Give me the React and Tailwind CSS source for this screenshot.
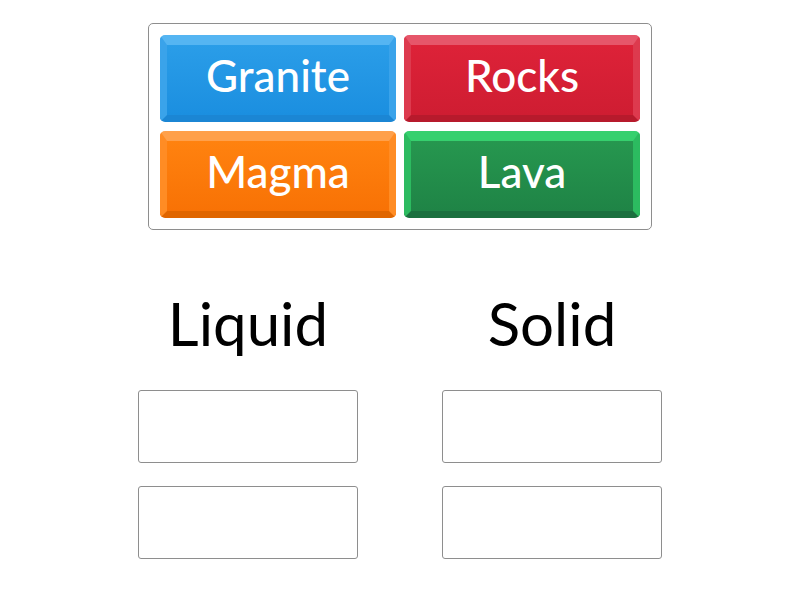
import React from 'react';

const tiles = [
  {
    label: 'Granite',
    outer: 'bg-[#4cb0f0] border-t-[#55b5f2] border-x-[#3aa3ea] border-b-[#1b86d4]',
    face: 'bg-gradient-to-b from-[#2a9de8] to-[#1b8fe0]',
  },
  {
    label: 'Rocks',
    outer: 'bg-[#e4485b] border-t-[#e6566a] border-x-[#dd3a4e] border-b-[#b71a2c]',
    face: 'bg-gradient-to-b from-[#dd2238] to-[#cf1d32]',
  },
  {
    label: 'Magma',
    outer: 'bg-[#ff9a3c] border-t-[#ffa04a] border-x-[#ff8c24] border-b-[#e06600]',
    face: 'bg-gradient-to-b from-[#ff820f] to-[#f87205]',
  },
  {
    label: 'Lava',
    outer: 'bg-[#33cc6a] border-t-[#36d06e] border-x-[#2cbb60] border-b-[#1b703f]',
    face: 'bg-gradient-to-b from-[#26974f] to-[#1f8446]',
  },
];

const Tile = ({ label, outer, face }) => (
  <div className={`h-[87px] rounded-[5px] border-solid border-t-[10px] border-x-[7px] border-b-[7px] overflow-hidden ${outer}`}>
    <div className={`h-full flex items-center justify-center text-white text-[44px] font-medium leading-none pb-[10px] ${face}`}>
      {label}
    </div>
  </div>
);

const Column = ({ title }) => (
  <div className="w-[220px] flex flex-col items-center">
    <div className="h-[90px] flex items-center justify-center text-[60px] text-black leading-none">{title}</div>
    <div className="mt-[22px] w-full h-[73px] border border-[#8e8e8e] rounded-[3px]" />
    <div className="mt-[23px] w-full h-[73px] border border-[#8e8e8e] rounded-[3px]" />
  </div>
);

export default function App() {
  return (
    <div className="w-[800px] h-[600px] bg-white flex flex-col items-center pt-[23px]" style={{ fontFamily: 'Lato, "Open Sans", sans-serif' }}>
      <div className="w-[504px] border border-[#8e8e8e] rounded-[5px] p-[11px] grid grid-cols-2 gap-x-[8px] gap-y-[9px]">
        {tiles.map((t) => (
          <Tile key={t.label} {...t} />
        ))}
      </div>
      <div className="mt-[48px] flex gap-[84px]">
        <Column title="Liquid" />
        <Column title="Solid" />
      </div>
    </div>
  );
}
